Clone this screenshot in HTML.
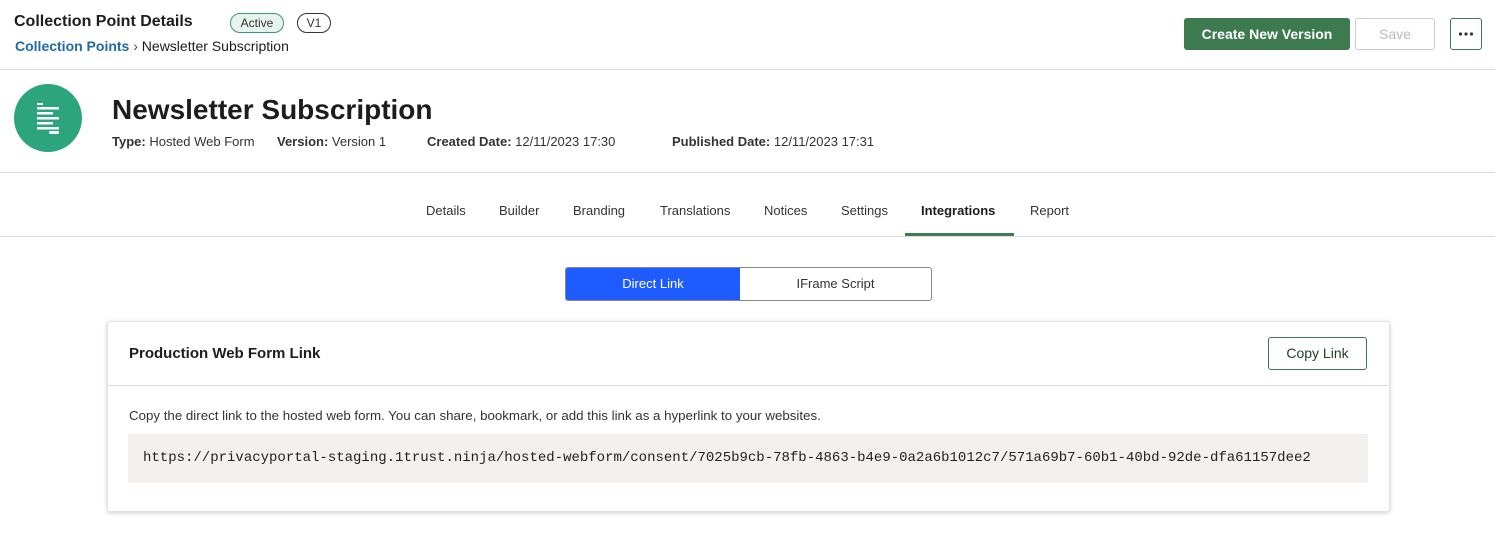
<!DOCTYPE html>
<html><head><style>
*{box-sizing:border-box;margin:0;padding:0}
body{width:1495px;height:545px;background:#fff;font-family:"Liberation Sans",sans-serif;color:#1d1d1d;position:relative;overflow:hidden}
.a{position:absolute}
.pill{position:absolute;border-radius:11px;font-size:12px;text-align:center;line-height:18px;height:20px}
.btn{position:absolute;border-radius:3px;font-size:14px;text-align:center;font-weight:bold}
.tab{position:absolute;top:203px;font-size:13px;color:#333}
</style></head><body>
<div class="a" style="left:14px;top:13px;font-size:16px;font-weight:bold">Collection Point Details</div>
<div class="pill" style="left:230px;top:13px;width:54px;border:1px solid #3a9a72;background:#e8f5ee;color:#333">Active</div>
<div class="pill" style="left:297px;top:13px;width:34px;border:1px solid #333;color:#333">V1</div>
<div class="a" style="left:15px;top:38px;font-size:14px"><span style="color:#1f6aa8;font-weight:bold">Collection Points</span> <span style="color:#444">›</span> Newsletter Subscription</div>
<div class="btn" style="left:1184px;top:18px;width:166px;height:32px;line-height:32px;background:#3d7a4f;color:#fff">Create New Version</div>
<div class="btn" style="left:1355px;top:18px;width:80px;height:32px;line-height:30px;border:1px solid #ccc;color:#bbb;font-weight:normal">Save</div>
<div class="a" style="left:1450px;top:18px;width:32px;height:32px;border:1px solid #3d7a4f;border-radius:3px">
<svg width="30" height="30"><g fill="#333"><circle cx="9.5" cy="15" r="1.6"/><circle cx="15" cy="15" r="1.6"/><circle cx="20.5" cy="15" r="1.6"/></g></svg></div>
<div class="a" style="left:0;top:69px;width:1495px;height:1px;background:#ddd"></div>
<svg class="a" style="left:14px;top:84px" width="68" height="68"><circle cx="34" cy="34" r="34" fill="#2ca57d"/><g fill="#fff"><rect x="23" y="19" width="6" height="2"/><rect x="23" y="23" width="22" height="2.5"/><rect x="23" y="28" width="16" height="2.5"/><rect x="23" y="33" width="22" height="2.5"/><rect x="23" y="38" width="16" height="2.5"/><rect x="23" y="43" width="22" height="2.5"/><rect x="35" y="47" width="10" height="3" rx="1.5"/></g></svg>
<div class="a" style="left:112px;top:94px;font-size:28px;font-weight:bold">Newsletter Subscription</div>
<div class="a" style="left:112px;top:134px;font-size:13px;color:#333;white-space:pre"><b>Type:</b> Hosted Web Form</div>
<div class="a" style="left:277px;top:134px;font-size:13px;color:#333"><b>Version:</b> Version 1</div>
<div class="a" style="left:427px;top:134px;font-size:13px;color:#333"><b>Created Date:</b> 12/11/2023 17:30</div>
<div class="a" style="left:672px;top:134px;font-size:13px;color:#333"><b>Published Date:</b> 12/11/2023 17:31</div>
<div class="a" style="left:0;top:172px;width:1495px;height:1px;background:#ddd"></div>
<div class="tab" style="left:426px">Details</div>
<div class="tab" style="left:499px">Builder</div>
<div class="tab" style="left:573px">Branding</div>
<div class="tab" style="left:660px">Translations</div>
<div class="tab" style="left:764px">Notices</div>
<div class="tab" style="left:841px">Settings</div>
<div class="tab" style="left:921px;font-weight:bold;color:#1d1d1d">Integrations</div>
<div class="tab" style="left:1030px">Report</div>
<div class="a" style="left:905px;top:233px;width:109px;height:3px;background:#3d7a4f"></div>
<div class="a" style="left:0;top:236px;width:1495px;height:1px;background:#ddd"></div>
<div class="a" style="left:565px;top:267px;width:367px;height:34px;border:1px solid #888;border-radius:3px;overflow:hidden;font-size:13px">
<div class="a" style="left:0;top:0;width:174px;height:32px;background:#1f5cff;color:#fff;text-align:center;line-height:32px">Direct Link</div>
<div class="a" style="left:174px;top:0;width:191px;height:32px;text-align:center;line-height:32px;color:#333">IFrame Script</div></div>
<div class="a" style="left:107px;top:321px;width:1283px;height:191px;border:1px solid #e2e2e2;border-radius:3px;box-shadow:0 1px 4px rgba(0,0,0,.2)">
<div class="a" style="left:21px;top:23px;font-size:15px;font-weight:bold">Production Web Form Link</div>
<div class="btn" style="left:1160px;top:15px;width:99px;height:33px;line-height:31px;border:1px solid #3d7a4f;color:#1d3d2a;font-weight:normal">Copy Link</div>
<div class="a" style="left:0;top:63px;width:1281px;height:1px;background:#ddd"></div>
<div class="a" style="left:21px;top:86px;font-size:13.3px;color:#333">Copy the direct link to the hosted web form. You can share, bookmark, or add this link as a hyperlink to your websites.</div>
<div class="a" style="left:20px;top:112px;width:1240px;height:49px;background:#f3f0ed;font-family:'Liberation Mono',monospace;font-size:14px;line-height:49px;padding-left:15px;color:#222;white-space:nowrap">https://privacyportal-staging.1trust.ninja/hosted-webform/consent/7025b9cb-78fb-4863-b4e9-0a2a6b1012c7/571a69b7-60b1-40bd-92de-dfa61157dee2</div>
</div>
</body></html>
